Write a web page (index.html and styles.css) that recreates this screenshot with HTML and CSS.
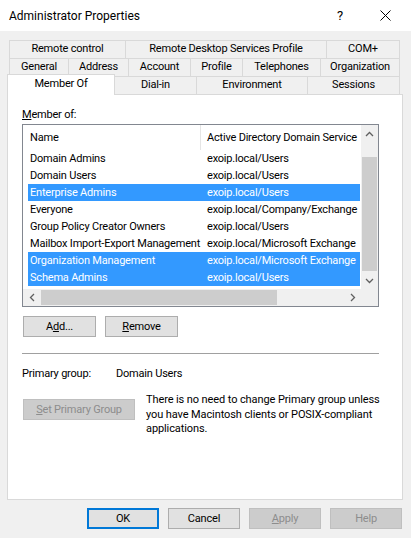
FILE: index.html
```html
<!DOCTYPE html>
<html>
<head>
<meta charset="utf-8">
<title>Administrator Properties</title>
<link rel="stylesheet" href="styles.css">
</head>
<body>
<div class="titlebar">
  <span class="title">Administrator Properties</span>
  <span class="help">?</span>
  <svg class="close" width="11" height="11" viewBox="0 0 11 11"><path d="M0.5 0.5L10.5 10.5M10.5 0.5L0.5 10.5" stroke="#000" stroke-width="1" fill="none"/></svg>
</div>

<div class="tabs">
  <div class="tabrow">
    <div class="tab w-rc">Remote control</div>
    <div class="tab w-rds">Remote Desktop Services Profile</div>
    <div class="tab w-com">COM+</div>
  </div>
  <div class="tabrow">
    <div class="tab w-gen">General</div>
    <div class="tab w-addr">Address</div>
    <div class="tab w-acc">Account</div>
    <div class="tab w-prof">Profile</div>
    <div class="tab w-tel">Telephones</div>
    <div class="tab w-org">Organization</div>
  </div>
  <div class="tabrow front">
    <div class="tab sel w-mem">Member Of</div>
    <div class="tab w-dial">Dial-in</div>
    <div class="tab w-env">Environment</div>
    <div class="tab w-ses">Sessions</div>
  </div>
</div>

<div class="panel">
  <div class="label"><u>M</u>ember of:</div>
  <div class="list">
    <div class="viewport">
      <div class="lhead">
        <div class="hc1">Name</div>
        <div class="hc2">Active Directory Domain Service</div>
      </div>
      <div class="row"><span class="n">Domain Admins</span><span class="p">exoip.local/Users</span></div>
      <div class="row"><span class="n">Domain Users</span><span class="p">exoip.local/Users</span></div>
      <div class="row sel"><span class="n">Enterprise Admins</span><span class="p">exoip.local/Users</span></div>
      <div class="row"><span class="n">Everyone</span><span class="p">exoip.local/Company/Exchange</span></div>
      <div class="row"><span class="n">Group Policy Creator Owners</span><span class="p">exoip.local/Users</span></div>
      <div class="row"><span class="n">Mailbox Import-Export Management</span><span class="p">exoip.local/Microsoft Exchange</span></div>
      <div class="row sel"><span class="n">Organization Management</span><span class="p">exoip.local/Microsoft Exchange</span></div>
      <div class="row sel"><span class="n">Schema Admins</span><span class="p">exoip.local/Users</span></div>
    </div>
    <div class="vscroll">
      <div class="sbtn"><svg width="9" height="6" viewBox="0 0 9 6"><path d="M1 5L4.5 1.5L8 5" fill="none" stroke="#606060" stroke-width="1.3"/></svg></div>
      <div class="vtrack"><div class="vthumb"></div></div>
      <div class="sbtn"><svg width="9" height="6" viewBox="0 0 9 6"><path d="M1 1L4.5 4.5L8 1" fill="none" stroke="#606060" stroke-width="1.3"/></svg></div>
    </div>
    <div class="hscroll">
      <div class="sbtn"><svg width="6" height="9" viewBox="0 0 6 9"><path d="M5 1L1.5 4.5L5 8" fill="none" stroke="#606060" stroke-width="1.3"/></svg></div>
      <div class="htrack"><div class="hthumb"></div></div>
      <div class="sbtn"><svg width="6" height="9" viewBox="0 0 6 9"><path d="M1 1L4.5 4.5L1 8" fill="none" stroke="#606060" stroke-width="1.3"/></svg></div>
    </div>
    <div class="corner"></div>
  </div>

  <div class="btnrow">
    <div class="btn">A<u>d</u>d...</div>
    <div class="btn"><u>R</u>emove</div>
  </div>

  <div class="sep"></div>

  <div class="pg">
    <span class="pglabel">Primary group:</span>
    <span>Domain Users</span>
  </div>

  <div class="setrow">
    <div class="btn dis wide"><u>S</u>et Primary Group</div>
    <div class="desc">There is no need to change Primary group unless<br>you have Macintosh clients or POSIX-compliant<br>applications.</div>
  </div>
</div>

<div class="footer">
  <div class="btn fbtn default">OK</div>
  <div class="btn fbtn">Cancel</div>
  <div class="btn fbtn dis"><u>A</u>pply</div>
  <div class="btn fbtn dis">Help</div>
</div>
</body>
</html>
```

FILE: styles.css
```css
* { box-sizing: border-box; }

html, body { margin: 0; padding: 0; }

body {
  width: 411px;
  height: 538px;
  overflow: hidden;
  background: #f0f0f0;
  color: #000;
  font-family: Roboto, "Liberation Sans", sans-serif;
  font-size: 11px;
  letter-spacing: -0.2px;
}

u { text-decoration: underline; text-underline-offset: 1px; }

/* title bar */
.titlebar {
  height: 31px;
  background: #fff;
  display: flex;
  align-items: center;
  padding-left: 9px;
  padding-right: 20px;
}
.title { flex: 1; font-size: 12px; letter-spacing: 0; }
.help { width: 12px; text-align: center; font-size: 13px; margin-right: 34px; }
.close { display: block; }

/* tabs */
.tabs { margin-top: 9px; padding-left: 9px; }
.tabrow { display: flex; height: 18px; }
.tabrow.front { align-items: flex-end; }
.tab {
  height: 18px;
  border: 1px solid #d9d9d9;
  border-bottom: none;
  border-right: none;
  background: #f0f0f0;
  text-align: center;
  line-height: 16px;
  white-space: nowrap;
}
.tab:last-child { border-right: 1px solid #d9d9d9; }
.tab.sel {
  height: 21px;
  margin: 0 0 -1px -2px;
  background: #fff;
  border-right: 1px solid #d9d9d9;
  line-height: 18px;
  position: relative;
  z-index: 1;
}
.tab.sel + .tab { border-left: none; }

.w-rc { width: 116px; }
.w-rds { width: 201px; }
.w-com { width: 74px; }
.w-gen { width: 59px; }
.w-addr { width: 60px; }
.w-acc { width: 62px; }
.w-prof { width: 52px; }
.w-tel { width: 78px; }
.w-org { width: 80px; }
.w-mem { width: 108px; }
.w-dial { width: 81px; }
.w-env { width: 111px; }
.w-ses { width: 93px; }

/* panel */
.panel {
  margin-left: 7px;
  width: 396px;
  height: 406px;
  border: 1px solid #d9d9d9;
  background: #fff;
  padding: 12px 0 0 14px;
}
.label { line-height: 15px; }

/* list view */
.list {
  margin-top: 2px;
  width: 357px;
  height: 183px;
  border: 1px solid #828790;
  display: grid;
  grid-template-columns: 338px 17px;
  grid-template-rows: 164px 17px;
}
.viewport { overflow: hidden; background: #fff; }
.lhead { display: flex; height: 25px; }
.hc1 {
  width: 178px;
  flex: none;
  padding-left: 7px;
  border-right: 1px solid #e5e5e5;
  display: flex;
  align-items: center;
}
.hc2 {
  padding-left: 6px;
  white-space: nowrap;
  display: flex;
  align-items: center;
}
.row {
  display: flex;
  height: 17px;
  line-height: 17px;
  margin-left: 5px;
  width: 332px;
  overflow: hidden;
  white-space: nowrap;
}
.row .n { width: 179px; flex: none; padding-left: 2px; }
.row .p { flex: none; }
.row.sel { background: #3399ff; color: #fff; }

.vscroll { background: #f0f0f0; display: flex; flex-direction: column; }
.sbtn { height: 17px; width: 17px; flex: none; display: flex; align-items: center; justify-content: center; }
.sbtn svg { display: block; }
.vtrack { flex: 1; display: flex; flex-direction: column; }
.vthumb { flex: 1; margin: 15px 1px 1px 1px; background: #cdcdcd; }

.hscroll { background: #f0f0f0; display: flex; }
.htrack { flex: 1; display: flex; }
.hthumb { width: 236px; margin: 1px 0 1px 1px; background: #cdcdcd; }
.corner { background: #f0f0f0; }

/* buttons */
.btn {
  width: 73px;
  height: 21px;
  border: 1px solid #adadad;
  background: #e1e1e1;
  display: flex;
  align-items: center;
  justify-content: center;
  white-space: nowrap;
}
.btn.dis { background: #cccccc; border-color: #bfbfbf; color: #8d8d8d; }
.btn.default { border-color: #0078d7; box-shadow: inset 0 0 0 1px #0078d7; }

.btnrow { display: flex; gap: 9px; margin-top: 9px; padding-left: 1px; }

.sep { width: 357px; height: 1px; background: #a0a0a0; margin-top: 16px; }

.pg { display: flex; margin-top: 12px; line-height: 15px; }
.pglabel { width: 94px; }

.setrow { display: flex; align-items: flex-start; margin-top: 12px; }
.btn.wide { width: 112px; margin-top: 6px; margin-left: 1px; flex: none; }
.desc { margin-left: 11px; line-height: 14.7px; letter-spacing: -0.1px; }

/* footer */
.footer {
  display: flex;
  justify-content: flex-end;
  gap: 9px;
  padding-right: 9px;
  margin-top: 8px;
}
.fbtn { width: 72px; }
```
